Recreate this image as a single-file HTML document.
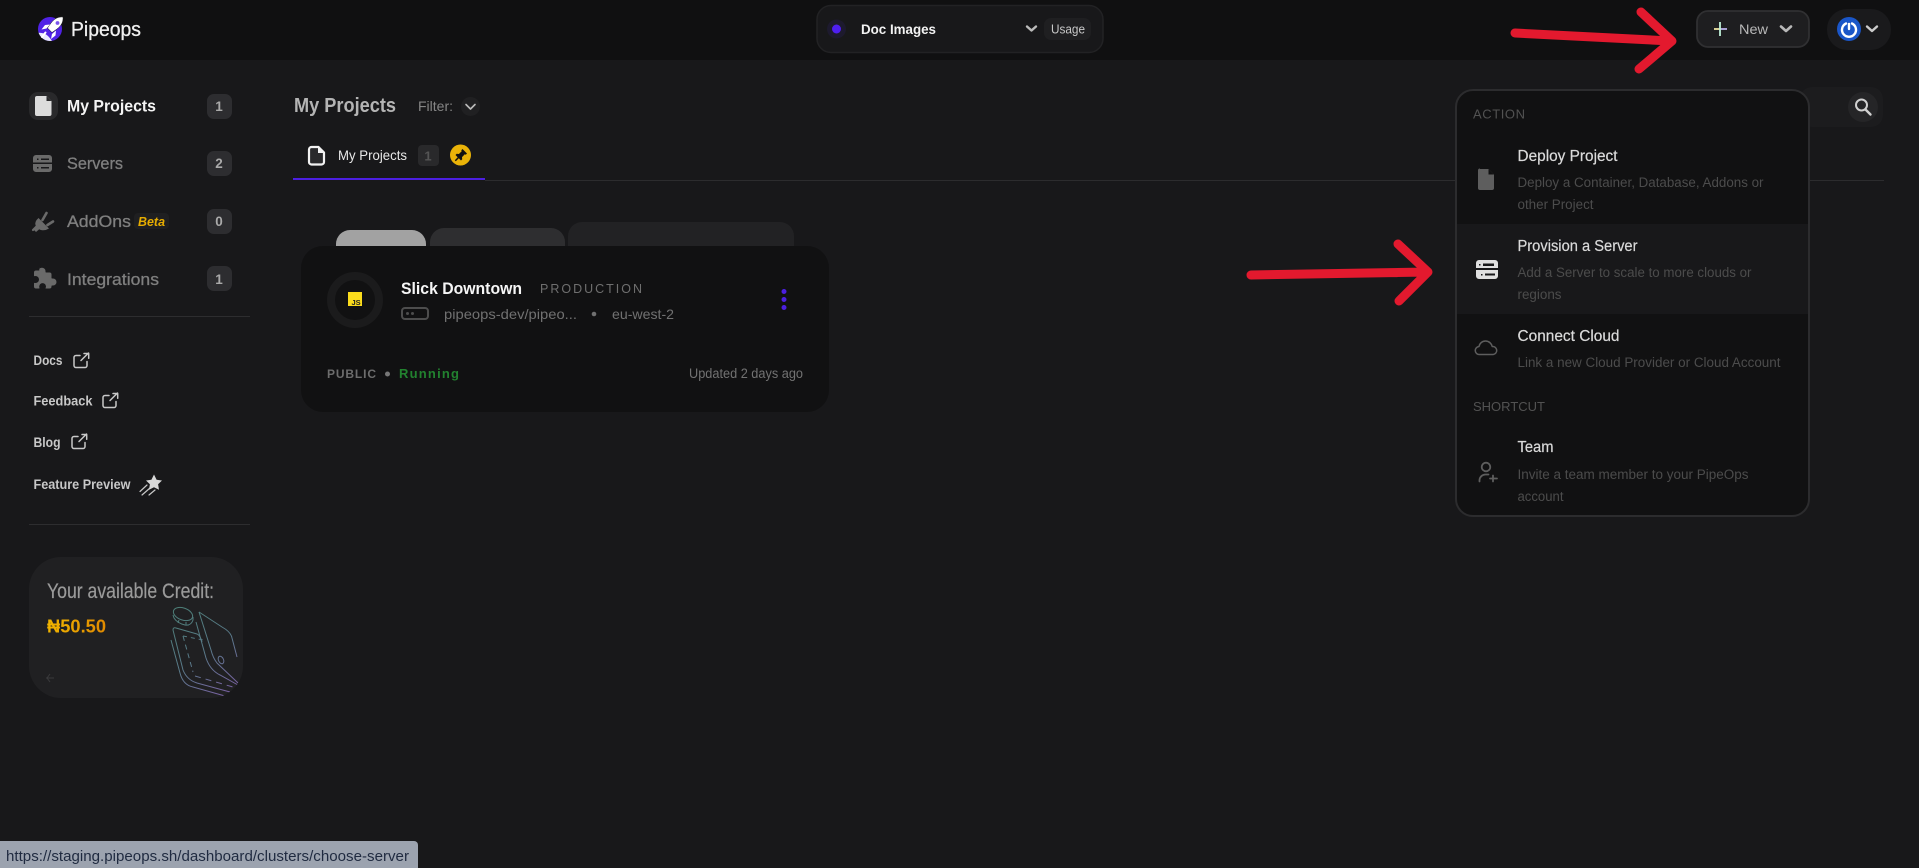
<!DOCTYPE html>
<html lang="en"><head><meta charset="utf-8"><title>Pipeops - My Projects</title>
<style>
html,body{margin:0;padding:0;background:#18181a;width:1919px;height:868px;overflow:hidden}
svg{display:block;position:absolute;left:0;top:0}
text{font-family:"Liberation Sans",sans-serif;white-space:pre}
.b{font-weight:700}
.m{stroke:currentColor;stroke-width:.25px}
</style></head><body>
<svg width="1919" height="868" viewBox="0 0 1919 868" xmlns="http://www.w3.org/2000/svg">
<defs>
<linearGradient id="w" gradientUnits="userSpaceOnUse" x1="175" y1="610" x2="235" y2="695"><stop offset="0" stop-color="#4d7f78"/><stop offset=".5" stop-color="#5a7a8a"/><stop offset="1" stop-color="#7d5ea6"/></linearGradient>
<linearGradient id="n" x1="0" x2="1" y1="0" y2="0"><stop offset="0" stop-color="#f0b400"/><stop offset="1" stop-color="#e08a00"/></linearGradient>
<clipPath id="cc"><rect x="29" y="557" width="214" height="141" rx="32"/></clipPath>
<clipPath id="lg"><circle cx="50" cy="29" r="12"/></clipPath>
</defs>
<rect width="1919" height="868" fill="#18181a"/>
<rect width="1919" height="60" fill="#101011"/>

<!-- logo -->
<circle cx="50" cy="29" r="12" fill="#5022e6"/>
<path d="M36 33q8-1 12 3t5 7H36z" fill="#e8e8ff" clip-path="url(#lg)"/>
<path d="M63 17c-5-.5-9 2-12 6l-3.500 5 4.500 4.500 5-3.500c4-3 6.500-7 6-12z" fill="#fff" stroke="#101011" stroke-width=".5"/>
<path d="M50 24.500l-5 .5-3.500 4.500 5-1zM56 30.500l-.5 5-4.500 3.500 1-5z" fill="#fff"/>
<circle cx="57.500" cy="23" r="1.900" fill="#7a55ea"/>
<path d="M45.500 32.500l-3.500 4.500" stroke="#fff" stroke-width="2" stroke-linecap="round"/>
<text x="71" y="36" font-size="20" fill="#f0f0f0" stroke="#f0f0f0" stroke-width=".3" textLength="70" lengthAdjust="spacingAndGlyphs">Pipeops</text>

<!-- org selector -->
<rect x="817" y="5.500" width="286" height="47" rx="14" fill="#18181a" stroke="#222224" stroke-width="1.500"/>
<circle cx="836.500" cy="29" r="9.500" fill="#1d1a2e"/><circle cx="836.500" cy="29" r="4.500" fill="#4f1ff0"/>
<text x="861" y="34" font-size="14" class="b" fill="#f2f2f2" textLength="75" lengthAdjust="spacingAndGlyphs">Doc Images</text>
<path d="M1027 26.500l4.500 4 4.500-4" fill="none" stroke="#bbb" stroke-width="2.400" stroke-linecap="round" stroke-linejoin="round"/>
<rect x="1044" y="18" width="47" height="22" rx="7" fill="#1f1f21"/>
<text x="1051" y="33.500" font-size="13" fill="#c8c8c8" textLength="34" lengthAdjust="spacingAndGlyphs">Usage</text>

<!-- new -->
<rect x="1697" y="11" width="112" height="36" rx="11" fill="#1e1e20" stroke="#303032" stroke-width="1.800"/>
<path d="M1714 29h6" stroke="#e9e0a0" stroke-width="1.800"/><path d="M1720 29h7" stroke="#b9b0e8" stroke-width="1.800"/><path d="M1720 22v14" stroke="#bff0d8" stroke-width="1.800"/>
<text x="1739" y="34" font-size="14" fill="#b8b8b8" textLength="29" lengthAdjust="spacingAndGlyphs">New</text>
<path d="M1781 26.500l5 4.500 5-4.500" fill="none" stroke="#b8b8b8" stroke-width="2.600" stroke-linecap="round" stroke-linejoin="round"/>

<!-- avatar -->
<rect x="1827" y="9" width="64" height="41" rx="20" fill="#1a1a1c"/>
<circle cx="1849" cy="29" r="12" fill="#1a56c8"/>
<path d="M1846 23.500a7 7 0 1 0 6 0" fill="none" stroke="#fff" stroke-width="2.400" stroke-linecap="round"/><path d="M1849 24v5" stroke="#fff" stroke-width="2.400" stroke-linecap="round"/>
<path d="M1867 26.500l5 4.500 5-4.500" fill="none" stroke="#ccc" stroke-width="2.400" stroke-linecap="round" stroke-linejoin="round"/>

<!-- sidebar -->
<rect x="29" y="92" width="29" height="28" rx="9" fill="#29292b"/>
<path d="M37 96h9.500l5 5v13a2 2 0 0 1-2 2H37a2 2 0 0 1-2-2V98a2 2 0 0 1 2-2z" fill="#dcdcdc"/><path d="M46.500 96v5h5z" fill="#29292b"/>
<text x="67" y="111.500" font-size="17" class="b" fill="#f4f4f4" textLength="89" lengthAdjust="spacingAndGlyphs">My Projects</text>
<text x="67" y="169" font-size="17" fill="#7f7f7f" stroke="#7f7f7f" stroke-width=".3" textLength="56" lengthAdjust="spacingAndGlyphs">Servers</text>
<text x="67" y="227" font-size="17" fill="#7f7f7f" stroke="#7f7f7f" stroke-width=".3" textLength="64" lengthAdjust="spacingAndGlyphs">AddOns</text>
<text x="67" y="285" font-size="17" fill="#7f7f7f" stroke="#7f7f7f" stroke-width=".3" textLength="92" lengthAdjust="spacingAndGlyphs">Integrations</text>
<rect x="134" y="213" width="35" height="16" rx="4" fill="#1f1f21"/>
<text x="138" y="226" font-size="13" font-style="italic" font-weight="700" fill="#e6ac00" textLength="27" lengthAdjust="spacingAndGlyphs">Beta</text>
<g fill="#2d2d30">
<rect x="207" y="94" width="25" height="25" rx="7"/><rect x="207" y="151" width="25" height="25" rx="7"/><rect x="207" y="209" width="25" height="25" rx="7"/><rect x="207" y="266" width="25" height="25" rx="7"/>
</g>
<g font-size="13.500" font-weight="700" fill="#aaa" text-anchor="middle">
<text x="219" y="111">1</text><text x="219" y="168">2</text><text x="219" y="226">0</text><text x="219" y="284">1</text>
</g>
<!-- servers icon -->
<path fill-rule="evenodd" d="M36 155h13a3 3 0 0 1 3 3v4.500H33V158a3 3 0 0 1 3-3zM33 164h19v5a3 3 0 0 1-3 3H36a3 3 0 0 1-3-3zM37 158.500h1.500v1.500H37zM41 158.500h8v1.500h-8zM37 167h1.500v1.500H37zM41 167h8v1.500h-8z" fill="#6a6a6a"/>
<!-- plug icon -->
<path d="M38.500 218l10.500 10.500q-4 2.500-8 1.500-1-.3-1.800-.8L36 232l-2-2 2.700-2.800q-.8-1-1.200-2.200-1-3.500 3-7z" fill="#6a6a6a"/>
<path d="M42.500 220l4-7M47.500 225l5.500-3.500" stroke="#6a6a6a" stroke-width="2.600" stroke-linecap="round"/>
<path d="M37 226l-4 4" stroke="#6a6a6a" stroke-width="2.200" stroke-linecap="round"/>
<!-- puzzle icon -->
<path d="M39 269.500a3.500 3.500 0 0 1 6.500 1.800c0 .7 0 1.200.5 1.200h3.500a2 2 0 0 1 2 2v3.500c0 .7 1 .5 1.500.5a3.500 3.500 0 0 1 0 7c-.5 0-1.500-.2-1.500.5v.5a2 2 0 0 1-2 2H46c-1 0 0-1 0-2a3.400 3.400 0 0 0-6.800 0c0 1 .8 2-.2 2h-3a2 2 0 0 1-2-2v-3c0-1 1-.5 1.500-.5a3.500 3.500 0 0 0 0-7c-.5 0-1.500.5-1.500-.5v-3a2 2 0 0 1 2-2h3c.5 0 .5-.7.3-1.300-.2-.7-.3-1.300.2-1.700z" fill="#6a6a6a"/>
<rect x="29" y="316" width="221" height="1" fill="#2d2d2f"/>

<g font-size="13.500" font-weight="700" fill="#c8c8c8">
<text x="33.500" y="365" textLength="29" lengthAdjust="spacingAndGlyphs">Docs</text>
<text x="33.500" y="405.500" textLength="59" lengthAdjust="spacingAndGlyphs">Feedback</text>
<text x="33.500" y="447" textLength="27" lengthAdjust="spacingAndGlyphs">Blog</text>
<text x="33.500" y="489" textLength="97" lengthAdjust="spacingAndGlyphs">Feature Preview</text>
</g>
<g fill="none" stroke="#c8c8c8" stroke-width="1.500" stroke-linecap="round" stroke-linejoin="round">
<path transform="translate(0 1.500)" d="M80 354h-4a2 2 0 0 0-2 2v8a2 2 0 0 0 2 2h9a2 2 0 0 0 2-2v-4M81 359l7.500-7.500M84 352h4.700v4.700"/>
<path transform="translate(0 3)" d="M109 392.500h-4a2 2 0 0 0-2 2v8a2 2 0 0 0 2 2h9a2 2 0 0 0 2-2v-4M110 397.500l7.500-7.500M113 390.500h4.700v4.700"/>
<path transform="translate(0 5)" d="M78 431.500h-4a2 2 0 0 0-2 2v8a2 2 0 0 0 2 2h9a2 2 0 0 0 2-2v-4M79 436.500l7.500-7.500M82 429.500h4.700v4.700"/>
<path transform="translate(0 8)" d="M147 477l-7 6.500M150 480l-8 7M155 482l-6 5" stroke-width="1.200"/>
</g>
<path transform="translate(0 8)" d="M154 466.500l2.600 5.200 5.400.8-3.900 3.800.9 5.500-5-2.600-5 2.600.9-5.500-3.900-3.800 5.400-.8z" fill="#d8d8d8"/>
<rect x="29" y="524" width="221" height="1" fill="#2d2d2f"/>

<!-- credit -->
<rect x="29" y="557" width="214" height="141" rx="32" fill="#202022"/>
<text x="47" y="598" font-size="21" fill="#9a9a9a" stroke="#9a9a9a" stroke-width=".2" textLength="167" lengthAdjust="spacingAndGlyphs">Your available Credit:</text>
<text x="47" y="632.500" font-size="18" class="b" fill="url(#n)" textLength="59" lengthAdjust="spacingAndGlyphs">₦50.50</text>
<path d="M46 678h8M50 674l-3 4 3 4" fill="none" stroke="#3a3a3c" stroke-width="1"/>
<g clip-path="url(#cc)" fill="none" stroke="url(#w)" stroke-width="1">
<path d="M199 612l23 15q9 5 10 11l5 19"/>
<path d="M199 612l12 38q2 8 6 13l21 20"/>
<path d="M196 622l10 36q4 12 14 17l18 10"/>
<path d="M176 628l21 6q3 1 5 8"/>
<path d="M176 628q-3-1-3 2l10 40q4 10 14 13l33 9"/>
<path d="M171 640l9 33q3 12 13 14l32 9"/>
<path d="M183 636l20 4" stroke-dasharray="4 4"/>
<path d="M183 636l10 36" stroke-dasharray="5 4"/>
<path d="M195 676l38 11" stroke-dasharray="6 5"/>
<ellipse cx="221" cy="660" rx="2.500" ry="4" transform="rotate(-25 221 660)"/>
<ellipse cx="183" cy="614" rx="10" ry="6" transform="rotate(20 183 614)"/>
<path d="M173 615l1 3q3 5 11 7 6 1 8-5l0-3M179 620l-1 3M186 622v3"/>
</g>

<!-- main header -->
<text x="294" y="112" font-size="20" class="b" fill="#b4b4b4" textLength="102" lengthAdjust="spacingAndGlyphs">My Projects</text>
<text x="418" y="111" font-size="14" fill="#858585" textLength="35" lengthAdjust="spacingAndGlyphs">Filter:</text>
<circle cx="470.500" cy="106.500" r="9.500" fill="#202022"/>
<path d="M466 104.500l4.500 4.500 4.500-4.500" fill="none" stroke="#bbb" stroke-width="1.600" stroke-linecap="round" stroke-linejoin="round"/>

<path d="M311.500 147h7l5.500 5.500v9.500a2.500 2.500 0 0 1-2.500 2.500h-10a2.500 2.500 0 0 1-2.500-2.500v-12.500a2.500 2.500 0 0 1 2.500-2.500z" fill="#29292b" stroke="#f2f2f2" stroke-width="2.200" stroke-linejoin="round"/>
<path d="M318.500 147v5.500h5.500z" fill="#f2f2f2" stroke="#f2f2f2" stroke-width="1"/>
<text x="338" y="160" font-size="14" fill="#e8e8e8" textLength="69" lengthAdjust="spacingAndGlyphs">My Projects</text>
<rect x="418" y="145" width="21" height="21" rx="4" fill="#29292b"/>
<text x="428" y="160.500" font-size="13" font-weight="700" fill="#555" text-anchor="middle">1</text>
<circle cx="460.500" cy="155" r="10.500" fill="#eab308"/>
<path d="M462.500 149l4.500 4.500-1.200 1.200-1-.4-2.800 2.800.2 2.200-1.200 1.200-2.200-2.200-3 2.900-1-1 2.900-3-2.200-2.200 1.200-1.200 2.200.2 2.800-2.800-.4-1z" fill="#111"/>
<rect x="293" y="178" width="192" height="2" fill="#4c1fe0"/>
<rect x="485" y="180" width="1399" height="1" fill="#2c2c2e"/>

<!-- search -->
<rect x="1800" y="87" width="83" height="40" rx="12" fill="#1c1c1e"/>
<circle cx="1863" cy="107" r="15" fill="#252527"/>
<circle cx="1861.500" cy="105" r="5.500" fill="none" stroke="#d0d0d0" stroke-width="2"/>
<path d="M1865.500 109.500l5 5" stroke="#d0d0d0" stroke-width="2.400" stroke-linecap="round"/>

<!-- card stack -->
<path d="M336 250v-6a14 14 0 0 1 14-14h62a14 14 0 0 1 14 14v6z" fill="#a2a2a2"/>
<path d="M430 250v-8a14 14 0 0 1 14-14h107a14 14 0 0 1 14 14v8z" fill="#2e2e30"/>
<path d="M568 250v-14a14 14 0 0 1 14-14h198a14 14 0 0 1 14 14v14z" fill="#222224"/>
<rect x="301" y="246" width="528" height="166" rx="22" fill="#111112"/>
<circle cx="355" cy="300" r="24" fill="none" stroke="#1b1b1c" stroke-width="8"/>
<rect x="348" y="292" width="14" height="14" fill="#fbdc1c"/>
<text x="351.500" y="305" font-size="7.500" font-weight="700" fill="#222">JS</text>
<text x="401" y="294" font-size="17" class="b" fill="#f6f6f6" textLength="121" lengthAdjust="spacingAndGlyphs">Slick Downtown</text>
<text x="540" y="293" font-size="12.500" fill="#6f6f6f" textLength="102" lengthAdjust="spacing">PRODUCTION</text>
<rect x="402" y="308" width="26" height="11" rx="3" fill="none" stroke="#4d4d4d" stroke-width="2"/>
<circle cx="407.500" cy="313.500" r="1.500" fill="#4d4d4d"/><circle cx="412.500" cy="313.500" r="1.500" fill="#4d4d4d"/>
<text x="444" y="319" font-size="14" fill="#717171" textLength="133" lengthAdjust="spacingAndGlyphs">pipeops-dev/pipeo...</text>
<circle cx="594" cy="314" r="2.300" fill="#707070"/>
<text x="612" y="319" font-size="14" fill="#717171" textLength="62" lengthAdjust="spacingAndGlyphs">eu-west-2</text>
<g fill="#4c1fe0"><circle cx="784" cy="291.500" r="2.500"/><circle cx="784" cy="299.500" r="2.500"/><circle cx="784" cy="307.500" r="2.500"/></g>
<text x="327" y="378" font-size="12" font-weight="700" fill="#6d6d6d" textLength="49" lengthAdjust="spacing">PUBLIC</text>
<circle cx="387.500" cy="374" r="2.500" fill="#777"/>
<text x="399" y="378" font-size="13" font-weight="700" fill="#22822f" textLength="60" lengthAdjust="spacing">Running</text>
<text x="689" y="378" font-size="13.500" fill="#727272" textLength="114" lengthAdjust="spacingAndGlyphs">Updated 2 days ago</text>

<!-- dropdown -->
<rect x="1456" y="90" width="353" height="426" rx="17" fill="#111112" stroke="#2c2c2e" stroke-width="2"/>
<rect x="1457" y="224" width="351" height="90" fill="#18181a"/>
<text x="1473" y="118.500" font-size="13" fill="#525252" textLength="52" lengthAdjust="spacing">ACTION</text>
<text x="1473" y="411" font-size="13" fill="#525252" textLength="72" lengthAdjust="spacing">SHORTCUT</text>
<g font-size="15.500" fill="#dadada" stroke="#dadada" stroke-width=".2">
<text x="1517.500" y="161" textLength="100" lengthAdjust="spacingAndGlyphs">Deploy Project</text>
<text x="1517.500" y="251" textLength="120" lengthAdjust="spacingAndGlyphs">Provision a Server</text>
<text x="1517.500" y="341" textLength="102" lengthAdjust="spacingAndGlyphs">Connect Cloud</text>
<text x="1517.500" y="452" textLength="36" lengthAdjust="spacingAndGlyphs">Team</text>
</g>
<g font-size="13.500" fill="#4c4c4c">
<text x="1517.500" y="187" textLength="246" lengthAdjust="spacingAndGlyphs">Deploy a Container, Database, Addons or</text>
<text x="1517.500" y="209" textLength="76" lengthAdjust="spacingAndGlyphs">other Project</text>
<text x="1517.500" y="277" textLength="234" lengthAdjust="spacingAndGlyphs">Add a Server to scale to more clouds or</text>
<text x="1517.500" y="299" textLength="44" lengthAdjust="spacingAndGlyphs">regions</text>
<text x="1517.500" y="367" textLength="263" lengthAdjust="spacingAndGlyphs">Link a new Cloud Provider or Cloud Account</text>
<text x="1517.500" y="479" textLength="231" lengthAdjust="spacingAndGlyphs">Invite a team member to your PipeOps</text>
<text x="1517.500" y="501" textLength="46" lengthAdjust="spacingAndGlyphs">account</text>
</g>
<path d="M1480 169h8.500l5.500 5.500v13.500a2 2 0 0 1-2 2h-12a2 2 0 0 1-2-2v-17.500a2 2 0 0 1 2-2z" fill="#5e5e5e"/><path d="M1488.500 169v5.500h5.500z" fill="#111112"/>
<path fill-rule="evenodd" d="M1479 260h16a3 3 0 0 1 3 3v5h-22v-5a3 3 0 0 1 3-3zM1476 270h22v6a3 3 0 0 1-3 3h-16a3 3 0 0 1-3-3zM1479 264h1.500v1.500H1479zM1483 263.500h11v2.500h-11zM1481 274h1.500v1.500H1481zM1485 273.500h10v2h-10z" fill="#e0e0e0"/>
<path d="M1479.500 354.500a4 4 0 0 1-.5-8c.7-3.500 3.500-5.500 6.500-5.500 3.500 0 6 2.500 6.700 5.500a4 4 0 0 1 1 8z" fill="none" stroke="#5e5e5e" stroke-width="1.500" stroke-linejoin="round"/>
<g fill="none" stroke="#5e5e5e" stroke-width="1.800" stroke-linecap="round">
<circle cx="1486" cy="467" r="4.300"/>
<path d="M1479.500 481.500v-1.500a6 6 0 0 1 6-5.500h3"/>
<path d="M1493 475.500v6M1490 478.500h7"/>
</g>

<!-- arrows -->
<g fill="none" stroke="#e3192e" stroke-width="9" stroke-linecap="round" stroke-linejoin="round">
<path d="M1515 33L1671 41M1641 12L1672 41L1639 69"/>
<path d="M1251 275L1428 272M1398 244L1428 272L1399 301"/>
</g>

<!-- status bar -->
<path d="M0 841h414a4 4 0 0 1 4 4v23H0z" fill="#9ca3af"/>
<text x="6" y="861" font-size="15" fill="#1f2a40" textLength="403" lengthAdjust="spacingAndGlyphs">https://staging.pipeops.sh/dashboard/clusters/choose-server</text>
</svg>
</body></html>
